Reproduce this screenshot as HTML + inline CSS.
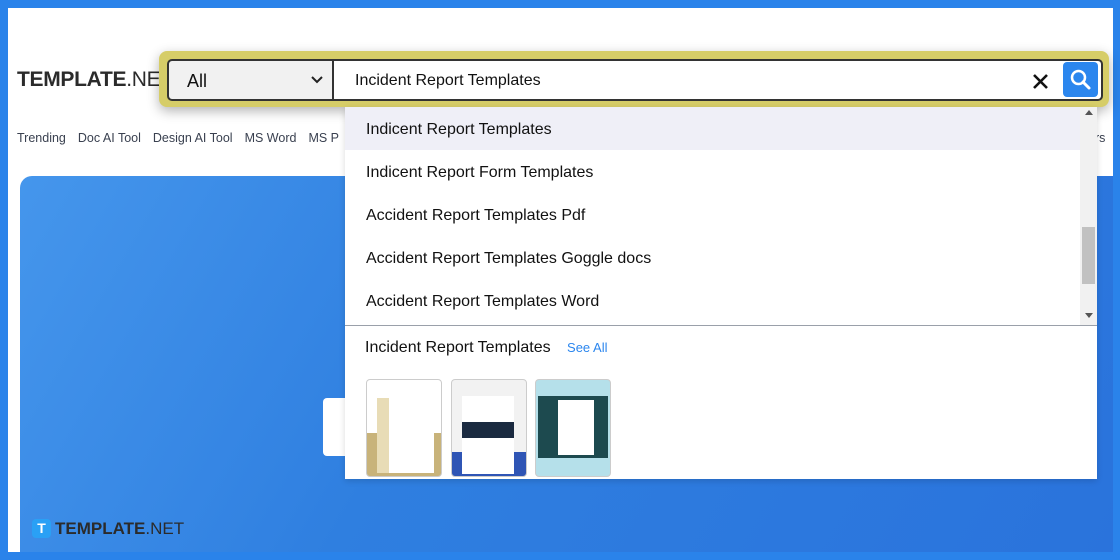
<!DOCTYPE html>
<html><head><style>
*{margin:0;padding:0;box-sizing:border-box}
body{width:1120px;height:560px;overflow:hidden;background:#2a83ea;font-family:"Liberation Sans",sans-serif;position:relative}
.page{position:absolute;left:8px;top:8px;width:1105px;height:544px;background:#fff}
.hero{position:absolute;left:20px;top:176px;width:1093px;height:376px;background:linear-gradient(120deg,#4596ec,#2f7fe0 40%,#2a73dc);border-top-left-radius:12px}
.nav{position:absolute;top:131px;left:17px;font-size:12.5px;color:#3a4150;white-space:nowrap}
.nav span{margin-right:12px}
.logo{position:absolute;left:17px;top:68px;font-size:21px;font-weight:bold;color:#2b2b2b;letter-spacing:-0.3px}
.logo i{font-style:normal;font-weight:normal}
.sb{position:absolute;left:159px;top:51px;width:950px;height:56px;background:#d6cd68;border-radius:8px;box-shadow:0 4px 12px rgba(0,0,0,.3)}
.sel{position:absolute;left:167px;top:59px;width:167px;height:42px;background:#f1f1f1;border:2px solid #333;border-radius:5px 0 0 5px;font-size:18px;padding:10px 0 0 18px;color:#111}
.inp{position:absolute;left:333px;top:59px;width:770px;height:42px;background:#fff;border:2px solid #333;border-left:1px solid #333;border-radius:0 5px 5px 0;font-size:16px;padding:11px 0 0 21px;color:#111}
.btn{position:absolute;left:1063px;top:62px;width:35px;height:35px;background:#2b86ee;border-radius:4px}
.dd{position:absolute;left:345px;top:107px;width:752px;height:372px;background:#fff;box-shadow:0 2px 6px rgba(0,0,0,.15)}
.it{height:43px;font-size:16px;color:#111;padding:14px 0 0 21px;width:735px}
.it.h{background:#efeff7}
.scr{position:absolute;left:735px;top:0;width:17px;height:218px;background:#f1f1f1}
.thumb{position:absolute;top:272px;width:76px;height:98px;border:1px solid #ccc;border-radius:4px;overflow:hidden}
</style></head><body>
<div class="page"></div>
<div class="logo">TEMPLATE<i>.NET</i></div>
<div class="nav"><span>Trending</span><span>Doc AI Tool</span><span>Design AI Tool</span><span>MS Word</span><span>MS P</span></div>
<div style="position:absolute;left:1088px;top:131px;font-size:12.5px;color:#3a4150">ors</div>
<div class="hero"></div>
<div style="position:absolute;left:323px;top:398px;width:30px;height:58px;background:#fff;border-radius:4px"></div>
<div style="position:absolute;left:32px;top:519px;width:19px;height:19px;background:#2aa0f5;border-radius:4px;color:#fff;font-weight:bold;font-size:14px;text-align:center;line-height:19px">T</div>
<div style="position:absolute;left:55px;top:519px;font-size:17px;font-weight:bold;color:#2b2b2b">TEMPLATE<span style="font-weight:normal">.NET</span></div>
<div class="sb"></div>
<div class="sel">All<svg style="position:absolute;right:8px;top:14px" width="14" height="10" viewBox="0 0 14 10"><path d="M2 2l5 5 5-5" stroke="#222" stroke-width="2" fill="none"/></svg></div>
<div class="inp">Incident Report Templates
<svg style="position:absolute;left:698px;top:12px" width="17" height="17" viewBox="0 0 17 17"><path d="M2 2l13 13M15 2L2 15" stroke="#111" stroke-width="2.6"/></svg></div>
<div class="btn"><svg width="35" height="35" viewBox="0 0 35 35"><circle cx="15.5" cy="15.5" r="6.5" stroke="#fff" stroke-width="2.5" fill="none"/><path d="M20 20l6 6" stroke="#fff" stroke-width="3" stroke-linecap="round"/></svg></div>
<div class="dd">
<div class="it h">Indicent Report Templates</div>
<div class="it">Indicent Report Form Templates</div>
<div class="it">Accident Report Templates Pdf</div>
<div class="it">Accident Report Templates Goggle docs</div>
<div class="it">Accident Report Templates Word</div>
<div class="scr"><div style="position:absolute;left:2px;top:120px;width:13px;height:57px;background:#c1c1c1"></div>
<div style="position:absolute;left:5px;top:3px;border:4px solid transparent;border-bottom:5px solid #555;border-top:0"></div>
<div style="position:absolute;left:5px;top:206px;border:4px solid transparent;border-top:5px solid #555;border-bottom:0"></div></div>
<div style="position:absolute;top:218px;left:0;width:752px;height:1px;background:#9aa0aa"></div>
<div style="position:absolute;top:232px;left:20px;font-size:16px;color:#111">Incident Report Templates <span style="font-size:13px;color:#2b86ee;margin-left:12px">See All</span></div>
<div class="thumb" style="left:21px;background:linear-gradient(#fff 0 55%,#c8b37a 55%)"><div style="position:absolute;left:22px;top:18px;width:45px;height:75px;background:#fff"></div><div style="position:absolute;left:10px;top:18px;width:12px;height:75px;background:#e8dcb6"></div></div>
<div class="thumb" style="left:106px;background:linear-gradient(#f2f2f2 0 75%,#2f55b5 75%)"><div style="position:absolute;left:10px;top:16px;width:52px;height:78px;background:#fff"></div><div style="position:absolute;left:10px;top:42px;width:52px;height:16px;background:#1a2a40"></div></div>
<div class="thumb" style="left:190px;background:#b5e0ea"><div style="position:absolute;left:2px;top:16px;width:70px;height:62px;background:#1d4a4f"></div><div style="position:absolute;left:22px;top:20px;width:36px;height:55px;background:#fff"></div></div>
</div>
</body></html>
